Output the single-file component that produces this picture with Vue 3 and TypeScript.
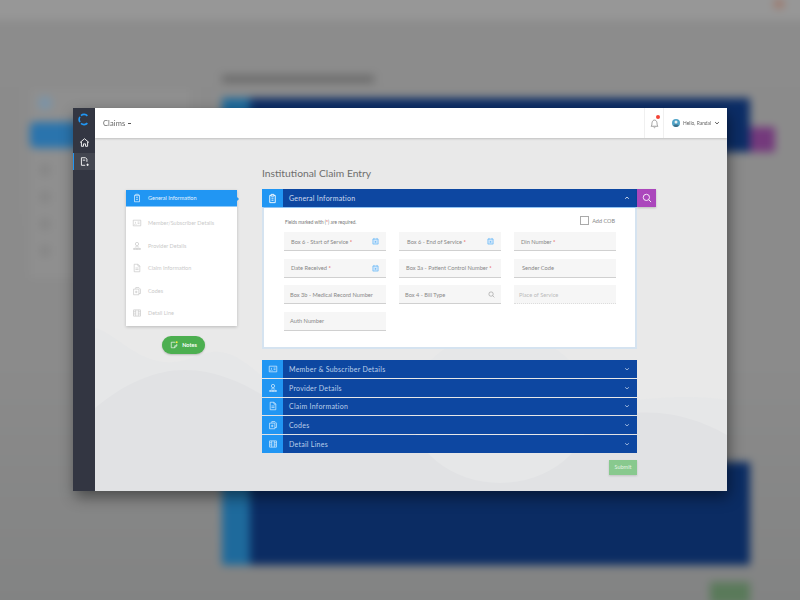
<script setup lang="ts">
const icons: Record<string, string> = {
  clipboard: "M6 3.500H4v10.500h8V3.500H10M6 2h4v2.500H6zM6.500 7.500h3M6.500 10.500h3",
  card: "M2 3.500h12v9H2zM4 10.500c.3-1.600 2.700-1.600 3 0M5.500 6.200v1.600M9 6.500h3M9 9h3",
  person: "M8 2.200a2.600 2.600 0 1 0 0 5.200a2.600 2.600 0 1 0 0-5.200M4.500 10.500c1-1.800 6-1.800 7 0M2.500 13.500v-1.500h3v1.500zM6.500 13.500v-1.500h3v1.500zM10.500 13.500v-1.500h3v1.500z",
  doc: "M3.500 2h6l3 3v9h-9zM9.500 2v3h3M5.500 8h5M5.500 10.500h5",
  copies: "M6 4.500V2.500h5l2.500 2.500v7H11M2.500 5h8.500v9h-8.500zM6.700 7.500v4M4.700 9.500h4",
  table: "M2.500 3h11v10h-11zM6 3v10M10 3v10M2.500 6h3.500M2.500 9.500h3.500M10 6h3.500M10 9.500h3.500",
};

const steps = [
  { label: "General Information", icon: "clipboard", active: true },
  { label: "Member/Subscriber Details", icon: "card", active: false },
  { label: "Provider Details", icon: "person", active: false },
  { label: "Claim Information", icon: "doc", active: false },
  { label: "Codes", icon: "copies", active: false },
  { label: "Detail Line", icon: "table", active: false },
];

const fields = [
  { label: "Box 6 - Start of Service", req: true, tail: "cal", pad: 7 },
  { label: "Box 6 - End of Service", req: true, tail: "cal", pad: 8 },
  { label: "Din Number", req: true, tail: "", pad: 7 },
  { label: "Date Received", req: true, tail: "cal", pad: 7 },
  { label: "Box 3a - Patient Control Number", req: true, tail: "", pad: 7 },
  { label: "Sender Code", req: false, tail: "", pad: 8 },
  { label: "Box 3b - Medical Record Number", req: false, tail: "", pad: 6 },
  { label: "Box 4 - Bill Type", req: false, tail: "search", pad: 6 },
  { label: "Place of Service", req: false, tail: "", pad: 5, off: true },
  { label: "Auth Number", req: false, tail: "", pad: 6 },
];

const sections = [
  { label: "Member & Subscriber Details", icon: "card" },
  { label: "Provider Details", icon: "person" },
  { label: "Claim Information", icon: "doc" },
  { label: "Codes", icon: "copies" },
  { label: "Detail Lines", icon: "table" },
];
</script>

<template>
  <div class="page">
    <!-- blurred page behind the dialog -->
    <div class="backdrop">
      <div class="bd-top"><i class="bd-dot"></i></div>
      <div class="bd-body">
        <div class="bd-side">
          <div class="bd-logo"></div>
          <div class="bd-active"></div>
          <div class="bd-line"></div>
          <div class="bd-line"></div>
          <div class="bd-line"></div>
          <div class="bd-line"></div>
        </div>
        <div class="bd-main">
          <div class="bd-title"></div>
          <div class="bd-head">
            <div class="bd-bar"><b></b></div>
            <div class="bd-purple"></div>
          </div>
          <div class="bd-rows"><b></b></div>
          <div class="bd-green"></div>
        </div>
      </div>
    </div>

    <div class="window">
      <aside class="rail">
        <svg class="logo" viewBox="0 0 16 16" fill="none" stroke="#2196f3" stroke-width="2.200">
          <path d="M12.500 3.200A6 6 0 0 0 4 2.800M2.600 4.500a6.500 6.500 0 0 0 0 7M4 13.200a6 6 0 0 0 8.500-.4" />
        </svg>
        <div class="rail-item">
          <svg viewBox="0 0 16 16" fill="none" stroke="#fff" stroke-width="1.300">
            <path d="M1.500 8L8 2.500L14.500 8M3.500 7v6.500h3V10h3v3.500h3V7" />
          </svg>
        </div>
        <div class="rail-item current">
          <svg viewBox="0 0 16 16" fill="none" stroke="#fff" stroke-width="1.300">
            <path d="M9 13.500H3.500v-11h6l2 2v4M5.500 6h3.500M12.500 11v3.500M10.800 12.800h3.400" />
          </svg>
        </div>
      </aside>

      <div class="main">
        <header class="topbar">
          <span class="crumb">Claims <i class="crumb-caret"></i></span>
          <div class="bell-box">
            <svg class="bell" viewBox="0 0 16 16" fill="none" stroke="#777" stroke-width="1">
              <path d="M3 12c1.500-1.500 1-3.500 1.500-5.500C5 4 6.500 3 8 3s3 1 3.500 3.500C12 8.500 11.500 10.500 13 12zM6.800 13.500c.4.800 2 .8 2.400 0" />
            </svg>
            <i class="badge"></i>
          </div>
          <div class="user">
            <svg class="avatar" viewBox="0 0 16 16">
              <circle cx="8" cy="8" r="8" fill="#4fa3c7" />
              <circle cx="8" cy="6.200" r="3" fill="#e8eef0" />
              <path d="M2.500 13.500c1-3.500 10-3.500 11 0a8 8 0 0 1-11 0z" fill="#3e6e88" />
            </svg>
            <span class="hello">Hello, Randal</span>
            <svg class="user-caret" viewBox="0 0 8 8" fill="none" stroke="#555" stroke-width="1.300">
              <path d="M1.500 2.800L4 5.200L6.500 2.800" />
            </svg>
          </div>
        </header>

        <section class="content">
          <svg class="waves" viewBox="0 0 632 353" preserveAspectRatio="none">
            <path d="M0 190C20 195 40 222 70 224C95 226 105 212 125 214C150 216 170 245 200 265L540 262C580 258 610 258 632 262V353H0z" fill="#e6e7e8" />
            <path d="M0 270C30 245 60 232 90 232C120 232 150 245 175 262L540 275C580 272 610 285 632 297V353H0z" fill="#e1e2e4" />
            <ellipse cx="405" cy="270" rx="90" ry="75" fill="#e6e7e8" />
          </svg>

          <div class="left">
            <nav class="steps">
              <div v-for="s in steps" :key="s.label" class="step" :class="{ active: s.active }">
                <svg viewBox="0 0 16 16" fill="none" stroke="currentColor" stroke-width="1">
                  <path :d="icons[s.icon]" />
                </svg>
                <span>{{ s.label }}</span>
              </div>
            </nav>
            <button class="notes">
              <svg viewBox="0 0 16 16" fill="none" stroke="#fff" stroke-width="1.300">
                <path d="M11 2.500H2.500v11h7l4-4V6M9.500 13.500v-4h4" />
                <circle cx="13.500" cy="2.500" r="1.800" fill="#ffeb3b" stroke="none" />
              </svg>
              Notes
            </button>
          </div>

          <div class="right">
            <h1>Institutional Claim Entry</h1>
            <div class="panel-head">
              <div class="head-icon">
                <svg viewBox="0 0 16 16" fill="none" stroke="#fff" stroke-width="1.300">
                  <path :d="icons.clipboard" />
                </svg>
              </div>
              <span class="head-label">General Information</span>
              <svg class="chev" viewBox="0 0 8 8" fill="none" stroke="#fff" stroke-width="1">
                <path d="M1.500 5L4 2.800L6.500 5" />
              </svg>
              <div class="head-search">
                <svg viewBox="0 0 16 16" fill="none" stroke="#fff" stroke-width="1.400">
                  <path d="M7 2a5 5 0 1 0 0 10a5 5 0 1 0 0-10M10.700 10.700L14.500 14.500" />
                </svg>
              </div>
            </div>

            <div class="panel-body">
              <div class="panel-meta">
                <span class="hint">Fields marked with (<em>*</em>) are required.</span>
                <label class="cob"><i class="box"></i>Add COB</label>
              </div>
              <div class="fields">
                <div
                  v-for="f in fields"
                  :key="f.label"
                  class="field"
                  :class="{ off: f.off }"
                  :style="{ paddingLeft: f.pad + 'px' }"
                >
                  <span>{{ f.label }}<em v-if="f.req"> *</em></span>
                  <svg v-if="f.tail === 'cal'" viewBox="0 0 16 16" class="cal">
                    <path d="M2 3.500h12V15H2z" fill="#cfe6fb" stroke="#64b5f6" stroke-width="1.500" />
                    <path d="M4.500 1v3.500M11.500 1v3.500" stroke="#64b5f6" stroke-width="1.500" />
                    <path d="M6.500 8.500h3v3h-3z" fill="#64b5f6" />
                  </svg>
                  <svg v-if="f.tail === 'search'" viewBox="0 0 16 16" class="find" fill="none" stroke="#8a8a8a" stroke-width="1.200">
                    <path d="M7 2a5 5 0 1 0 0 10a5 5 0 1 0 0-10M10.700 10.700L14.500 14.500" />
                  </svg>
                </div>
              </div>
            </div>

            <div class="sections">
              <div v-for="s in sections" :key="s.label" class="section">
                <div class="sec-icon">
                  <svg viewBox="0 0 16 16" fill="none" stroke="#e3f2fd" stroke-width="1.100">
                    <path :d="icons[s.icon]" />
                  </svg>
                </div>
                <span class="sec-label">{{ s.label }}</span>
                <svg class="chev" viewBox="0 0 8 8" fill="none" stroke="#c5d6ee" stroke-width="1">
                  <path d="M1.500 3L4 5.200L6.500 3" />
                </svg>
              </div>
            </div>

            <div class="actions">
              <button class="submit">Submit</button>
            </div>
          </div>
        </section>
      </div>
    </div>
  </div>
</template>

<style>
html,
body {
  margin: 0;
  background: #878787;
}
</style>

<style scoped>
.page {
  position: relative;
  width: 800px;
  height: 600px;
  overflow: hidden;
  font-family: Lato, "Open Sans", sans-serif;
  background: linear-gradient(#8e8e8e, #8a8a8a 50%, #828282);
}

/* backdrop */
.backdrop {
  position: absolute;
  inset: -12px;
  filter: blur(4.500px);
  display: flex;
  flex-direction: column;
  background: linear-gradient(#8c8c8c 0, #8b8b8b 60%, #828383 100%);
}
.bd-top {
  height: 32px;
  background: #979797;
  display: flex;
  justify-content: flex-end;
  padding: 12px 28px 0 0;
  box-sizing: border-box;
}
.bd-dot {
  width: 10px;
  height: 8px;
  border-radius: 50%;
  background: #a07060;
}
.bd-body {
  flex: 1;
  display: flex;
}
.bd-side {
  width: 160px;
  margin: 68px 0 0 42px;
  height: 190px;
  background: #8f8f8f;
  box-sizing: border-box;
}
.bd-logo {
  width: 14px;
  height: 14px;
  margin: 8px 0 0 8px;
  border-radius: 50%;
  background: #7a94a8;
}
.bd-active {
  height: 26px;
  margin-top: 12px;
  background: #2a74ad;
  border-radius: 5px 0 0 5px;
}
.bd-line {
  width: 10px;
  height: 10px;
  margin: 17px 0 0 10px;
  background: #858585;
}
.bd-main {
  margin-left: 32px;
  width: 553px;
}
.bd-title {
  width: 152px;
  height: 8px;
  margin-top: 55px;
  background: #6c6c6c;
}
.bd-head {
  display: flex;
  align-items: flex-end;
  margin-top: 15px;
}
.bd-bar {
  width: 528px;
  height: 54px;
  background: #0c2d66;
  flex: none;
}
.bd-bar b,
.bd-rows b {
  display: block;
  width: 28px;
  height: 100%;
  background: #1e6a9c;
}
.bd-purple {
  flex: none;
  width: 25px;
  height: 25px;
  background: #74397c;
}
.bd-rows {
  width: 528px;
  height: 103px;
  margin-top: 310px;
  background: #0b2c63;
}
.bd-green {
  width: 40px;
  height: 22px;
  margin: 17px 0 0 488px;
  background: #5a7a5a;
}

/* window */
.window {
  position: absolute;
  left: 73px;
  top: 108px;
  width: 654px;
  height: 383px;
  display: flex;
  box-shadow: 2px 6px 14px rgba(0, 0, 0, 0.45);
  filter: blur(0.350px);
}
.rail {
  width: 22px;
  flex: none;
  background: #333642;
  display: flex;
  flex-direction: column;
  align-items: center;
}
.logo {
  width: 12px;
  height: 13px;
  margin: 5px 0 8px;
}
.rail-item {
  width: 100%;
  height: 17px;
  display: flex;
  align-items: center;
  justify-content: center;
  box-sizing: border-box;
}
.rail-item svg {
  width: 11px;
  height: 11px;
}
.rail-item.current {
  margin-top: 2px;
  background: #434650;
  border-left: 1px solid #2196f3;
}
.main {
  flex: 1;
  display: flex;
  flex-direction: column;
  min-width: 0;
}
.topbar {
  height: 30px;
  flex: none;
  background: #fff;
  display: flex;
  align-items: center;
  box-shadow: 0 1px 2px rgba(0, 0, 0, 0.18);
  position: relative;
  z-index: 1;
}
.crumb {
  font-size: 7.500px;
  color: #666;
  margin-left: 8px;
  flex: 1;
  letter-spacing: 0.100px;
}
.crumb-caret {
  display: inline-block;
  width: 3px;
  height: 1px;
  margin-left: 1px;
  background: #555;
  vertical-align: middle;
}
.bell-box {
  position: relative;
  width: 20px;
  height: 100%;
  display: flex;
  align-items: center;
  justify-content: center;
  border-left: 1px solid #f0f0f0;
  border-right: 1px solid #f0f0f0;
  box-sizing: border-box;
}
.bell {
  width: 11px;
  height: 11px;
}
.badge {
  position: absolute;
  top: 7px;
  left: 11px;
  width: 4px;
  height: 4px;
  border-radius: 50%;
  background: #f44336;
}
.user {
  width: 63px;
  display: flex;
  align-items: center;
  padding-left: 8px;
  box-sizing: border-box;
}
.avatar {
  width: 8px;
  height: 8px;
  flex: none;
}
.hello {
  font-size: 4.900px;
  color: #666;
  margin-left: 3px;
  white-space: nowrap;
}
.user-caret {
  width: 6px;
  height: 6px;
  margin-left: 3px;
}

.content {
  flex: 1;
  position: relative;
  display: flex;
  background: #e9e9e9;
  overflow: hidden;
}
.waves {
  position: absolute;
  inset: 0;
  width: 100%;
  height: 100%;
}
.left {
  position: relative;
  width: 111px;
  margin: 52px 0 0 31px;
  flex: none;
}
.steps {
  background: #fff;
  height: 136px;
  box-shadow: 0 1px 3px rgba(0, 0, 0, 0.2);
  display: flex;
  flex-direction: column;
}
.step {
  flex: none;
  height: 22.500px;
  display: flex;
  align-items: center;
  padding-left: 6px;
  font-size: 5.500px;
  color: #cacaca;
  gap: 6px;
  white-space: nowrap;
}
.step svg {
  width: 10px;
  height: 10px;
  flex: none;
  color: #c2c2c2;
}
.step.active {
  height: 17px;
  box-sizing: border-box;
  border-bottom: 1px solid #90caf9;
  background: #2196f3;
  color: #e7f3fe;
  position: relative;
}
.step.active svg {
  color: #fff;
}
.step.active::after {
  content: "";
  position: absolute;
  right: -2px;
  top: 7px;
  border-left: 2px solid #2196f3;
  border-top: 2px solid transparent;
  border-bottom: 2px solid transparent;
}
.step:nth-child(2) {
  margin-top: 5px;
}
.notes {
  display: flex;
  align-items: center;
  justify-content: center;
  gap: 4px;
  width: 43px;
  height: 18px;
  margin: 10px 0 0 36px;
  padding: 0;
  border: 0;
  border-radius: 9px;
  background: #4caf50;
  color: #fff;
  font: 700 5.500px Lato, sans-serif;
  box-shadow: 0 1px 2px rgba(0, 0, 0, 0.2);
}
.notes svg {
  width: 8px;
  height: 8px;
}
.right {
  position: relative;
  width: 394px;
  margin-left: 25px;
  flex: none;
}
h1 {
  margin: 25px 0 0;
  height: 26px;
  font-size: 10.300px;
  line-height: 20px;
  font-weight: 400;
  color: #6e6e6e;
  white-space: nowrap;
}
.panel-head {
  width: 375px;
  height: 18px;
  display: flex;
  align-items: center;
  background: #0d47a1;
  position: relative;
}
.head-icon {
  width: 21px;
  height: 100%;
  background: #2196f3;
  display: flex;
  align-items: center;
  justify-content: center;
}
.head-icon svg {
  width: 11px;
  height: 11px;
}
.head-label {
  margin-left: 6px;
  font-size: 7px;
  letter-spacing: 0.250px;
  color: #cfdcf0;
  flex: 1;
}
.chev {
  width: 6px;
  height: 6px;
  margin-right: 7px;
}
.head-search {
  position: absolute;
  left: 375px;
  top: 0;
  width: 19px;
  height: 18px;
  background: #ab47bc;
  display: flex;
  align-items: center;
  justify-content: center;
  box-shadow: 0 1px 2px rgba(0, 0, 0, 0.2);
}
.head-search svg {
  width: 10px;
  height: 10px;
}
.panel-body {
  width: 375px;
  height: 142px;
  box-sizing: border-box;
  background: #fff;
  border: 2px solid #d5e3f0;
  border-top: 1px solid #90c4f4;
  padding: 0 20px;
}
.panel-meta {
  display: flex;
  justify-content: space-between;
  height: 24px;
  position: relative;
}
.hint {
  font-size: 4.700px;
  color: #777;
  margin-top: 11px;
  line-height: 6px;
  margin-left: 1px;
}
.hint em {
  color: #e53935;
  font-style: normal;
}
.cob {
  font-size: 5.500px;
  color: #888;
  display: flex;
  align-items: center;
  gap: 3px;
  height: 9px;
  margin-top: 8px;
}
.box {
  width: 7px;
  height: 7px;
  border: 1px solid #aaa;
  background: #fff;
}
.fields {
  display: grid;
  grid-template-columns: 102px 102px 102px;
  column-gap: 13px;
  row-gap: 7.670px;
}
.field {
  height: 19px;
  box-sizing: border-box;
  background: #f6f6f6;
  border-bottom: 1px solid #d0d0d0;
  display: flex;
  align-items: center;
  justify-content: space-between;
  padding-right: 6px;
  font-size: 5.700px;
  color: #888;
  white-space: nowrap;
}
.field em {
  color: #e53935;
  font-style: normal;
}
.field.off {
  color: #bcbcbc;
  border-bottom: 1px dotted #ddd;
}
.field svg {
  flex: none;
}
.cal {
  width: 7px;
  height: 8px;
  margin-right: 1px;
}
.find {
  width: 7px;
  height: 7px;
}
.sections {
  width: 375px;
  margin-top: 11px;
  display: flex;
  flex-direction: column;
  gap: 1px;
}
.section {
  height: 17.800px;
  display: flex;
  align-items: center;
  background: #0d47a1;
}
.sec-icon {
  width: 21px;
  height: 100%;
  background: #2196f3;
  display: flex;
  align-items: center;
  justify-content: center;
}
.sec-icon svg {
  width: 10px;
  height: 10px;
}
.sec-label {
  margin-left: 6px;
  font-size: 7px;
  letter-spacing: 0.250px;
  color: #bccfea;
  flex: 1;
}
.actions {
  width: 375px;
  display: flex;
  justify-content: flex-end;
  margin-top: 7px;
}
.submit {
  width: 28px;
  height: 15px;
  padding: 0;
  border: 0;
  background: #88c98e;
  color: #e4f3e5;
  font: 5.500px Lato, sans-serif;
  box-shadow: 0 1px 2px rgba(0, 0, 0, 0.15);
}
</style>
